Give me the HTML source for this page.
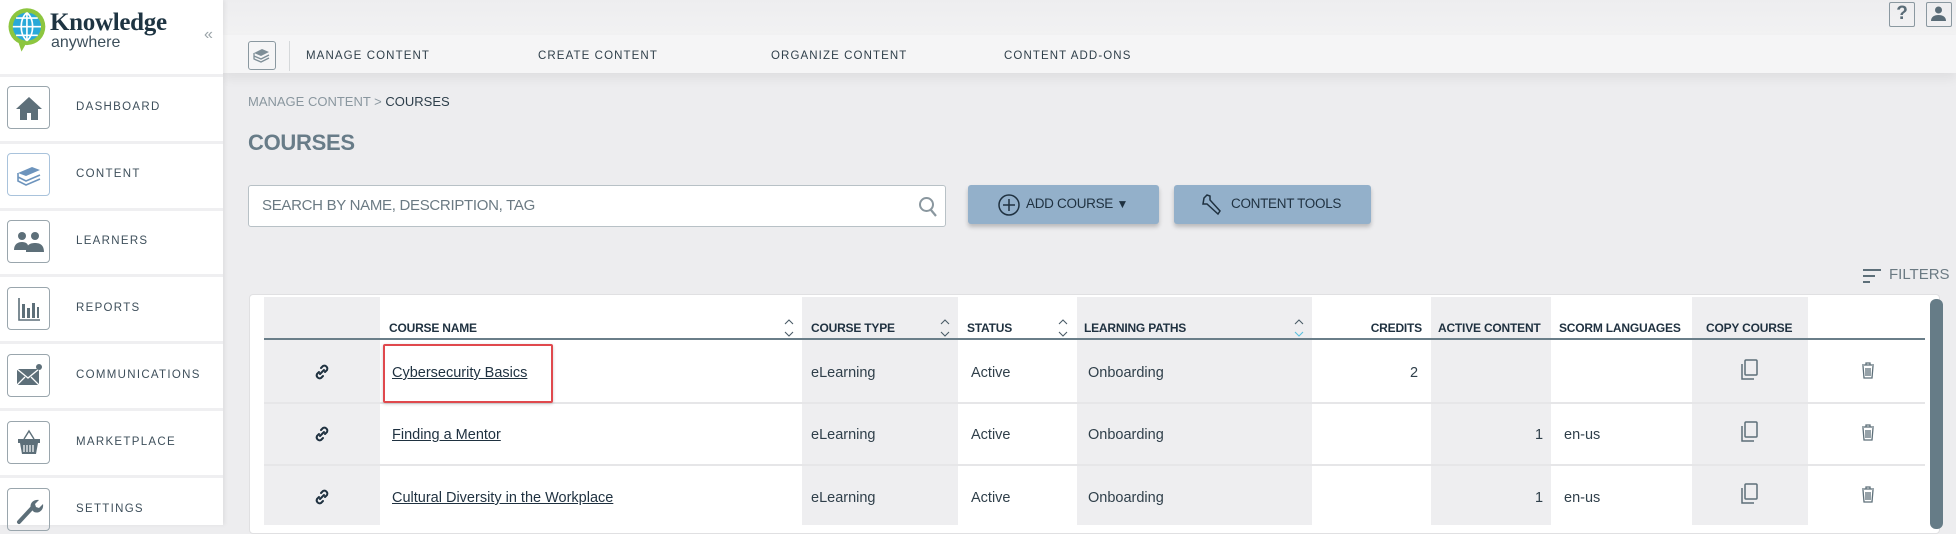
<!DOCTYPE html>
<html><head><meta charset="utf-8"><style>
*{box-sizing:border-box;margin:0;padding:0}
body{width:1956px;height:525px;overflow:hidden;background:#ededef;font-family:"Liberation Sans",sans-serif;position:relative;color:#2d3e4a}
.a{position:absolute}
.side{left:0;top:0;width:223px;height:525px;background:#fff;box-shadow:2px 0 4px rgba(0,0,0,.06)}
.sep{position:absolute;left:0;width:223px;height:3px;background:#efeff1}
.ib{position:absolute;left:7px;width:43px;height:43px;border:1.5px solid #9aa6ad;border-radius:4px;display:flex;align-items:center;justify-content:center}
.lbl{position:absolute;left:76px;font-size:11.5px;letter-spacing:1.3px;color:#3e4f5b}
.nav{font-size:11.5px;letter-spacing:1.1px;color:#2f3f4a;top:50px}
.th{font-size:12px;font-weight:bold;color:#1f3140;top:321px;letter-spacing:-.2px}
.td{font-size:14.5px;color:#2f3f4a}
.gc{position:absolute;top:297px;height:228px;background:#eeeef0}
.rl{position:absolute;left:264px;width:1661px;height:2px;background:#e6e6e8}
.arr{position:absolute;top:317px;width:10px;height:22px}
a{color:#1f3140;text-decoration:underline}
</style></head><body>
<div class="a" style="left:223px;top:0;width:1733px;height:36px;background:linear-gradient(#ededef,#f2f2f3)"></div>
<div class="a" style="left:223px;top:35px;width:1733px;height:38px;background:#f5f5f6;box-shadow:0 6px 10px rgba(0,0,0,.06)"></div>
<div class="a" style="left:1889px;top:2px;width:26px;height:25px;border:1.5px solid #8a98a0;border-radius:2px;font-weight:bold;font-size:19px;color:#5a6c77;text-align:center;line-height:22px">?</div>
<div class="a" style="left:1926px;top:2px;width:26px;height:25px;border:1.5px solid #8a98a0;border-radius:2px"><svg width="23" height="22" viewBox="0 0 23 22"><circle cx="11.5" cy="7" r="3.5" fill="#5a6c77"/><path d="M4 18c0-4 3-6 7.5-6s7.5 2 7.5 6z" fill="#5a6c77"/></svg></div>
<div class="a" style="left:248px;top:41px;width:28px;height:29px;border:1.5px solid #8a98a0;border-radius:3px"><svg width="25" height="26" viewBox="0 0 25 26"><path d="M5 11l8-4 7 3-8 4z" fill="#7e8e97"/><path d="M5 11v3l7 3 8-4M5 14v3l7 3 8-4" stroke="#7e8e97" fill="none" stroke-width="1.3"/></svg></div>
<div class="a" style="left:289px;top:41px;width:1px;height:30px;background:#d5d8da"></div>
<div class="a nav" style="left:306px">MANAGE CONTENT</div>
<div class="a nav" style="left:538px">CREATE CONTENT</div>
<div class="a nav" style="left:771px">ORGANIZE CONTENT</div>
<div class="a nav" style="left:1004px">CONTENT ADD-ONS</div>
<div class="a side">
<svg class="a" style="left:5px;top:5px" width="46" height="52" viewBox="0 0 42 48"><circle cx="20" cy="20" r="17" fill="#8dc63f"/><circle cx="20" cy="20" r="13" fill="#29a9d8"/><path d="M7 20h26M20 7v26M10 12h20M10 28h20M20 7c-7 6-7 20 0 26M20 7c7 6 7 20 0 26" stroke="#fff" stroke-width="1.5" fill="none"/><path d="M12 34l3 9 4-7z" fill="#8dc63f"/></svg>
<div class="a" style="left:50px;top:9px;font-family:'Liberation Serif',serif;font-weight:bold;font-size:25px;color:#1e3442;letter-spacing:-.3px">Knowledge</div>
<div class="a" style="left:51px;top:34px;font-size:16px;color:#3d4f5b">anywhere</div>
<div class="a" style="left:204px;top:26px;font-size:16px;color:#9aa3a8">«</div>
<div class="sep" style="top:74px"></div>
<div class="ib" style="top:86px"><svg width="30" height="28" viewBox="0 0 30 28"><path d="M15 3L2 15h4v11h7v-7h4v7h7V15h4z" fill="#5d6f79"/></svg></div><div class="lbl" style="top:101px">DASHBOARD</div>
<div class="sep" style="top:141px"></div>
<div class="ib" style="top:153px;border-color:#a9c3dc"><svg width="30" height="28" viewBox="0 0 30 28"><path d="M4 12l14-6 8 3-14 6z" fill="#6d94bd"/><path d="M4 12v4l8 4 14-6M4 16v4l8 4 14-6" stroke="#6d94bd" fill="none" stroke-width="1.6"/></svg></div><div class="lbl" style="top:168px">CONTENT</div>
<div class="sep" style="top:208px"></div>
<div class="ib" style="top:220px"><svg width="32" height="24" viewBox="0 0 32 24"><circle cx="9" cy="6" r="4" fill="#5d6f79"/><circle cx="22" cy="6" r="4" fill="#5d6f79"/><path d="M1 20c0-6 4-8 8-8s6 2 6 4v4zM13 22c0-7 4-9 9-9s9 2 9 9z" fill="#5d6f79"/></svg></div><div class="lbl" style="top:235px">LEARNERS</div>
<div class="sep" style="top:274px"></div>
<div class="ib" style="top:287px"><svg width="28" height="28" viewBox="0 0 28 28"><path d="M4 3v22h21" stroke="#5d6f79" stroke-width="1.6" fill="none"/><rect x="7" y="9" width="3" height="14" fill="#5d6f79"/><rect x="12" y="13" width="3" height="10" fill="#5d6f79"/><rect x="17" y="8" width="3" height="15" fill="#5d6f79"/><rect x="22" y="12" width="2" height="11" fill="#5d6f79"/></svg></div><div class="lbl" style="top:302px">REPORTS</div>
<div class="sep" style="top:341px"></div>
<div class="ib" style="top:354px"><svg width="30" height="28" viewBox="0 0 30 28"><rect x="3" y="7" width="22" height="16" fill="#5d6f79"/><path d="M3 7l11 9 11-9M3 23l8-8M25 23l-8-8" stroke="#fff" stroke-width="1.3" fill="none"/><circle cx="25" cy="5" r="3" fill="#5d6f79"/></svg></div><div class="lbl" style="top:369px">COMMUNICATIONS</div>
<div class="sep" style="top:408px"></div>
<div class="ib" style="top:421px"><svg width="30" height="30" viewBox="0 0 30 30"><path d="M10 11l5-8 5 8" stroke="#5d6f79" fill="none" stroke-width="1.4"/><rect x="4" y="11" width="22" height="4" fill="#5d6f79"/><path d="M6 15h18l-2 11H8z" fill="#5d6f79"/><path d="M10 17v7M13 17v7M16 17v7M19 17v7" stroke="#fff" stroke-width="1.2"/></svg></div><div class="lbl" style="top:436px">MARKETPLACE</div>
<div class="sep" style="top:475px"></div>
<div class="ib" style="top:488px"><svg width="30" height="32" viewBox="0 0 30 32"><path d="M5 28l13-14" stroke="#5d6f79" stroke-width="4" stroke-linecap="round"/><path d="M17 15c-2-5 2-10 8-9l-4 4 1 3 3 1 4-4c1 6-4 10-9 8z" fill="#5d6f79"/></svg></div><div class="lbl" style="top:503px">SETTINGS</div>
</div>
<div class="a" style="left:248px;top:94px;font-size:13px;color:#8a979f">MANAGE CONTENT &gt; <span style="color:#2d3e4a">COURSES</span></div>
<div class="a" style="left:248px;top:130px;font-size:22px;font-weight:bold;color:#687c88;letter-spacing:-.3px">COURSES</div>
<div class="a" style="left:248px;top:185px;width:698px;height:42px;background:#fff;border:1px solid #b8c1c6;border-radius:3px"></div>
<div class="a" style="left:262px;top:197px;font-size:15px;color:#6b7a83;letter-spacing:-.3px">SEARCH BY NAME, DESCRIPTION, TAG</div>
<svg class="a" style="left:918px;top:196px" width="20" height="22" viewBox="0 0 20 22"><circle cx="8.5" cy="8.5" r="6.5" stroke="#8a979f" stroke-width="2" fill="none"/><path d="M13 14l5 6" stroke="#8a979f" stroke-width="2.2"/></svg>
<div class="a" style="left:968px;top:185px;width:191px;height:39px;background:#93b0ca;border-radius:3px;box-shadow:0 3px 4px rgba(0,0,0,.22)"></div>
<svg class="a" style="left:997px;top:193px" width="24" height="24" viewBox="0 0 24 24"><circle cx="12" cy="12" r="10" stroke="#1f3140" stroke-width="1.5" fill="none"/><path d="M12 6v12M6 12h12" stroke="#1f3140" stroke-width="1.5"/></svg>
<div class="a" style="left:1026px;top:196px;font-size:13.5px;color:#1f3140;letter-spacing:-.3px">ADD COURSE <span style="font-size:12px">▼</span></div>
<div class="a" style="left:1174px;top:185px;width:197px;height:39px;background:#93b0ca;border-radius:3px;box-shadow:0 3px 4px rgba(0,0,0,.22)"></div>
<svg class="a" style="left:1201px;top:193px" width="22" height="24" viewBox="0 0 22 24"><path d="M3 5l3-3 3 1 0 4 10 11-2 3-11-10-4 0z" stroke="#1f3140" stroke-width="1.5" fill="none"/></svg>
<div class="a" style="left:1231px;top:196px;font-size:13.5px;color:#1f3140;letter-spacing:-.3px">CONTENT TOOLS</div>
<svg class="a" style="left:1862px;top:268px" width="20" height="16" viewBox="0 0 20 16"><path d="M1 2h18M1 8h12M1 14h7" stroke="#5d6f79" stroke-width="2"/></svg>
<div class="a" style="left:1889px;top:266px;font-size:15px;color:#6b7a83">FILTERS</div>
<div class="a" style="left:249px;top:294px;width:1691px;height:240px;background:#fff;border:1px solid #e0e0e2;border-radius:4px"></div>
<div class="gc" style="left:264px;width:116px"></div>
<div class="gc" style="left:802px;width:156px"></div>
<div class="gc" style="left:1077px;width:235px"></div>
<div class="gc" style="left:1431px;width:120px"></div>
<div class="gc" style="left:1692px;width:116px"></div>
<div class="a" style="left:264px;top:338px;width:1661px;height:2px;background:#6a7e89"></div>
<div class="rl" style="top:402px"></div><div class="rl" style="top:464px"></div>
<div class="a" style="left:1930px;top:299px;width:13px;height:230px;background:#667c87;border-radius:6px"></div>
<div class="a th" style="left:389px">COURSE NAME</div>
<div class="a th" style="left:811px">COURSE TYPE</div>
<div class="a th" style="left:967px">STATUS</div>
<div class="a th" style="left:1084px">LEARNING PATHS</div>
<div class="a th" style="left:1370px;width:52px;text-align:right">CREDITS</div>
<div class="a th" style="left:1438px">ACTIVE CONTENT</div>
<div class="a th" style="left:1559px">SCORM LANGUAGES</div>
<div class="a th" style="left:1706px">COPY COURSE</div>
<svg class="arr" style="left:784px" viewBox="0 0 10 22"><path d="M1 7l4-4 4 4M1 15l4 4 4-4" stroke="#4a5c67" fill="none" stroke-width="1.1"/></svg>
<svg class="arr" style="left:940px" viewBox="0 0 10 22"><path d="M1 7l4-4 4 4M1 15l4 4 4-4" stroke="#4a5c67" fill="none" stroke-width="1.1"/></svg>
<svg class="arr" style="left:1058px" viewBox="0 0 10 22"><path d="M1 7l4-4 4 4M1 15l4 4 4-4" stroke="#4a5c67" fill="none" stroke-width="1.1"/></svg>
<svg class="arr" style="left:1294px" viewBox="0 0 10 22"><path d="M1 7l4-4 4 4" stroke="#4a5c67" fill="none" stroke-width="1.1"/><path d="M1 15l4 4 4-4" stroke="#5bc0de" fill="none" stroke-width="1.1"/></svg>
<div class="a" style="left:383px;top:344px;width:170px;height:59px;border:2px solid #e0494d;border-radius:2px;box-shadow:0 1px 3px rgba(0,0,0,.2)"></div>
<svg width="0" height="0" style="position:absolute"><defs>
<symbol id="lk" viewBox="0 0 20 20"><path d="M8 12l4-4M9 6l2-2a3 3 0 014 4l-2 2M11 14l-2 2a3 3 0 01-4-4l2-2" stroke="#1f3140" stroke-width="2" fill="none" stroke-linecap="round"/></symbol>
<symbol id="cp" viewBox="0 0 20 22"><rect x="5" y="1" width="12" height="15" rx="1" stroke="#5d6f79" stroke-width="1.5" fill="none"/><path d="M2 5v15h12" stroke="#5d6f79" stroke-width="1.5" fill="none"/></symbol>
<symbol id="tr" viewBox="0 0 16 18"><path d="M2 4h12M6 4V2h4v2M3 5l1 12h8l1-12M6 7v8M8 7v8M10 7v8" stroke="#5d6f79" stroke-width="1.3" fill="none"/></symbol>
</defs></svg>
<svg class="a" style="left:312px;top:362px" width="20" height="20"><use href="#lk"/></svg>
<svg class="a" style="left:312px;top:424px" width="20" height="20"><use href="#lk"/></svg>
<svg class="a" style="left:312px;top:487px" width="20" height="20"><use href="#lk"/></svg>
<div class="a td" style="left:392px;top:365px"><a>Cybersecurity Basics</a></div>
<div class="a td" style="left:392px;top:427px"><a>Finding a Mentor</a></div>
<div class="a td" style="left:392px;top:490px"><a>Cultural Diversity in the Workplace</a></div>
<div class="a td" style="left:811px;top:365px">eLearning</div><div class="a td" style="left:811px;top:427px">eLearning</div><div class="a td" style="left:811px;top:490px">eLearning</div>
<div class="a td" style="left:971px;top:365px">Active</div><div class="a td" style="left:971px;top:427px">Active</div><div class="a td" style="left:971px;top:490px">Active</div>
<div class="a td" style="left:1088px;top:365px">Onboarding</div><div class="a td" style="left:1088px;top:427px">Onboarding</div><div class="a td" style="left:1088px;top:490px">Onboarding</div>
<div class="a td" style="left:1410px;top:365px">2</div>
<div class="a td" style="left:1535px;top:427px">1</div><div class="a td" style="left:1535px;top:490px">1</div>
<div class="a td" style="left:1564px;top:427px">en-us</div><div class="a td" style="left:1564px;top:490px">en-us</div>
<svg class="a" style="left:1740px;top:359px" width="20" height="22"><use href="#cp"/></svg>
<svg class="a" style="left:1740px;top:421px" width="20" height="22"><use href="#cp"/></svg>
<svg class="a" style="left:1740px;top:483px" width="20" height="22"><use href="#cp"/></svg>
<svg class="a" style="left:1860px;top:361px" width="16" height="18"><use href="#tr"/></svg>
<svg class="a" style="left:1860px;top:423px" width="16" height="18"><use href="#tr"/></svg>
<svg class="a" style="left:1860px;top:485px" width="16" height="18"><use href="#tr"/></svg>
</body></html>
